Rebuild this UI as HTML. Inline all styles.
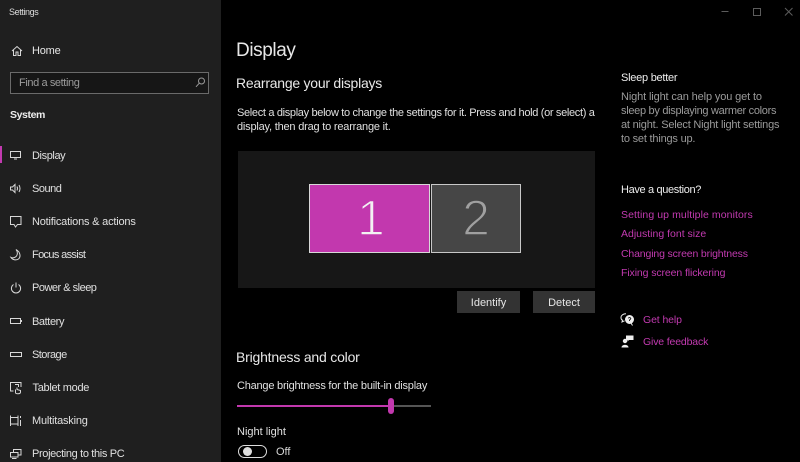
<!DOCTYPE html>
<html><head><meta charset="utf-8"><style>
html,body{margin:0;padding:0;background:#000}
#r{position:relative;width:800px;height:462px;overflow:hidden;background:#000;font-family:"Liberation Sans",sans-serif;color:#e6e6e6;filter:blur(.3px)}
.t{position:absolute;white-space:nowrap;line-height:16px;font-size:11px}
.n{left:32px;color:#e0e0e0}
.l{left:621px;color:#c23ab0;font-size:10.5px}
svg{position:absolute;overflow:visible;fill:none;stroke:#d8d8d8;stroke-width:1}
.b{position:absolute;background:#333;color:#e6e6e6;font-size:11px;text-align:center;top:291px;height:22px;line-height:25px}
</style></head><body><div id="r">
<div style="position:absolute;left:0;top:0;width:221px;height:462px;background:#1f1f1f"></div>
<div class="t" style="left:9px;top:4px;font-size:9px;color:#ddd;letter-spacing:-.4px">Settings</div>

<svg style="left:12px;top:46px" width="10" height="10" viewBox="0 0 10 10"><path d="M0 5 5 .5 10 5M1.500 4V9.500H4V6H6V9.500H8.500V4"/></svg>
<div class="t" style="left:32px;top:43px;color:#e6e6e6;letter-spacing:-.2px">Home</div>

<div style="position:absolute;left:10px;top:72px;width:197px;height:20px;border:1px solid #6a6a6a;background:#161616"></div>
<div class="t" style="left:19px;top:75px;color:#9c9c9c;letter-spacing:-.4px">Find a setting</div>
<svg style="left:195px;top:77px" width="11" height="11" viewBox="0 0 11 11"><circle cx="6.500" cy="4" r="3" stroke="#999"/><path d="M4.300 6.200 1 9.800" stroke="#999"/></svg>

<div class="t" style="left:10px;top:107px;color:#eee;font-weight:bold;font-size:10.5px;letter-spacing:-.4px">System</div>

<div style="position:absolute;left:0;top:146px;width:2px;height:17px;background:#c23ab0"></div>
<svg style="left:10px;top:151px" width="12" height="11" viewBox="0 0 12 11"><path d="M.5.500H10.500V6.500H.5ZM4 8H7"/></svg>
<div class="t n" style="top:148px;letter-spacing:-.4px">Display</div>

<svg style="left:10px;top:183px" width="12" height="11" viewBox="0 0 12 11"><path d="M.5 4H2.500L5 1.500V9.500L2.500 7H.5ZM7 3.500Q8 5.500 7 7.500M9 2Q11 5.500 9 9"/></svg>
<div class="t n" style="top:181px;letter-spacing:-.5px">Sound</div>

<svg style="left:10px;top:216px" width="12" height="13" viewBox="0 0 12 13"><path d="M.5.500H11V8.500H7.500L5.500 11 4 8.500H.5Z"/></svg>
<div class="t n" style="top:214px;letter-spacing:-.2px">Notifications &amp; actions</div>

<svg style="left:10px;top:249px" width="12" height="12" viewBox="0 0 12 12"><path d="M6 .5C8 3 8 7 4.500 8.500 3 9 2 9 1 8.500 2.500 11 6 11.500 8.500 10 11 8 10.500 3 6 .5Z"/></svg>
<div class="t n" style="top:247px;letter-spacing:-.65px">Focus assist</div>

<svg style="left:10px;top:282px" width="12" height="12" viewBox="0 0 12 12"><path d="M3.500 2.500A4.600 4.600 0 1 0 8.500 2.500M6 .5V5.500"/></svg>
<div class="t n" style="top:280px;letter-spacing:-.5px">Power &amp; sleep</div>

<svg style="left:10px;top:318px" width="12" height="7" viewBox="0 0 12 7"><path d="M.5.500H10.500V5.500H.5ZM11.500 2V4"/></svg>
<div class="t n" style="top:314px;letter-spacing:-.4px">Battery</div>

<svg style="left:10px;top:352px" width="12" height="6" viewBox="0 0 12 6"><path d="M.5.500H11.500V4.500H.5Z"/></svg>
<div class="t n" style="top:347px;letter-spacing:-.55px">Storage</div>

<svg style="left:10px;top:382px" width="12" height="13" viewBox="0 0 12 13"><path d="M3.500 9H.5V.5H11V5M5 2.500H8.500V5M5.500 7.500V10.500C5.500 12 10.500 12.500 10.500 10V8.500L7 7.500V5.500"/></svg>
<div class="t n" style="top:380px;left:32.500px;letter-spacing:-.3px">Tablet mode</div>

<svg style="left:10px;top:415px" width="12" height="12" viewBox="0 0 12 12"><path d="M.5.500V11M8 .500V11M.5 2.500H8V9H.5ZM10.500 1V3M10.500 5V11"/></svg>
<div class="t n" style="top:413px;letter-spacing:-.2px">Multitasking</div>

<svg style="left:10px;top:449px" width="12" height="11" viewBox="0 0 12 11"><path d="M3.500 3V.5H11V6H8M.5 3.500H8V8H.5ZM2 9.500H6.500"/></svg>
<div class="t n" style="top:446px;letter-spacing:-.35px">Projecting to this PC</div>

<svg style="left:721px;top:7.500px" width="72" height="10" viewBox="0 0 72 10"><path d="M.5 3.500H7.500M32.500.5H39.500V7.500H32.500ZM64 0 71.500 7.500M71.500 0 64 7.500" stroke="#5c5c5c"/></svg>

<div class="t" style="left:236px;top:39px;font-size:19px;line-height:24px;color:#e8e8e8;letter-spacing:-.4px">Display</div>
<div class="t" style="left:236px;top:74px;font-size:14px;line-height:18px;color:#e8e8e8;letter-spacing:-.25px">Rearrange your displays</div>
<div class="t" style="left:237px;top:105px;color:#e0e0e0;letter-spacing:-.33px">Select a display below to change the settings for it. Press and hold (or select) a</div>
<div class="t" style="left:237px;top:119px;color:#e0e0e0;letter-spacing:-.2px">display, then drag to rearrange it.</div>

<div style="position:absolute;left:238px;top:151px;width:357px;height:137px;background:#171717"></div>
<div style="position:absolute;left:309px;top:184px;width:119px;height:67px;border:1px solid #d8d8d8;background:#c238ae"></div>
<div style="position:absolute;left:431px;top:184px;width:88px;height:67px;border:1px solid #c8c8c8;background:#464646"></div>
<div class="t" style="left:357px;top:190px;font-size:50px;line-height:56px;color:#f2f2f2;width:22px;text-align:center;-webkit-text-stroke:1.500px #c238ae">1</div>
<div class="t" style="left:462px;top:190px;font-size:50px;line-height:56px;color:#a0a0a0;width:28px;text-align:center;-webkit-text-stroke:1.500px #464646">2</div>

<div class="b" style="left:457px;width:63px">Identify</div>
<div class="b" style="left:533px;width:62px">Detect</div>

<div class="t" style="left:236px;top:348px;font-size:14px;line-height:18px;color:#e8e8e8;letter-spacing:-.2px">Brightness and color</div>
<div class="t" style="left:237px;top:378px;color:#e0e0e0;letter-spacing:-.22px">Change brightness for the built-in display</div>
<div style="position:absolute;left:237px;top:405px;width:194px;height:2px;background:#555"></div>
<div style="position:absolute;left:237px;top:405px;width:154px;height:2px;background:#c238ae"></div>
<div style="position:absolute;left:388px;top:398px;width:6px;height:16px;border-radius:3px;background:#c238ae"></div>

<div class="t" style="left:237px;top:424px;color:#e0e0e0">Night light</div>
<div style="position:absolute;left:238px;top:445px;width:27px;height:11px;border:1.500px solid #ddd;border-radius:7px"></div>
<div style="position:absolute;left:243px;top:447px;width:9px;height:9px;border-radius:50%;background:#ddd"></div>
<div class="t" style="left:276px;top:444px;color:#d8d8d8">Off</div>

<div class="t" style="left:621px;top:70px;color:#eee;letter-spacing:-.25px">Sleep better</div>
<div class="t" style="left:621px;top:89px;color:#9a9a9a;letter-spacing:-.13px">Night light can help you get to</div>
<div class="t" style="left:621px;top:103px;color:#9a9a9a;letter-spacing:-.3px">sleep by displaying warmer colors</div>
<div class="t" style="left:621px;top:117px;color:#9a9a9a;letter-spacing:-.2px">at night. Select Night light settings</div>
<div class="t" style="left:621px;top:131px;color:#9a9a9a;letter-spacing:-.2px">to set things up.</div>
<div class="t" style="left:621px;top:182px;color:#eee;letter-spacing:-.35px">Have a question?</div>

<div class="t l" style="top:207px;letter-spacing:.08px">Setting up multiple monitors</div>
<div class="t l" style="top:226px">Adjusting font size</div>
<div class="t l" style="top:246px;letter-spacing:-.15px">Changing screen brightness</div>
<div class="t l" style="top:265px;letter-spacing:-.1px">Fixing screen flickering</div>

<svg style="left:620px;top:313px" width="14" height="13" viewBox="0 0 14 13"><path d="M6 .8C3 .8 1 2.500 1 4.500 1 6 2 7 2.500 7.200L2 9 4.500 7.800" stroke="#eee"/><circle cx="9.500" cy="6.500" r="4" fill="#eee" stroke="#eee"/><path d="M11 10 12.500 12.500" stroke="#eee"/><path d="M8.200 5.300Q9.500 3.800 10.800 5.300 10.800 6.200 9.500 7V8" stroke="#222"/></svg>
<div class="t l" style="left:643px;top:312px;letter-spacing:-.1px">Get help</div>

<svg style="left:621px;top:335px" width="13" height="13" viewBox="0 0 13 13"><circle cx="4" cy="6" r="2.200" fill="#eee" stroke="none"/><path d="M.5 12.500C.5 9 7.500 9 7.500 12.500Z" fill="#eee" stroke="none"/><path d="M5 .5H12.500V5H8L6.500 6.500V5H5Z" fill="#eee" stroke="none"/></svg>
<div class="t l" style="left:643px;top:334px;letter-spacing:-.15px">Give feedback</div>
</div></body></html>
